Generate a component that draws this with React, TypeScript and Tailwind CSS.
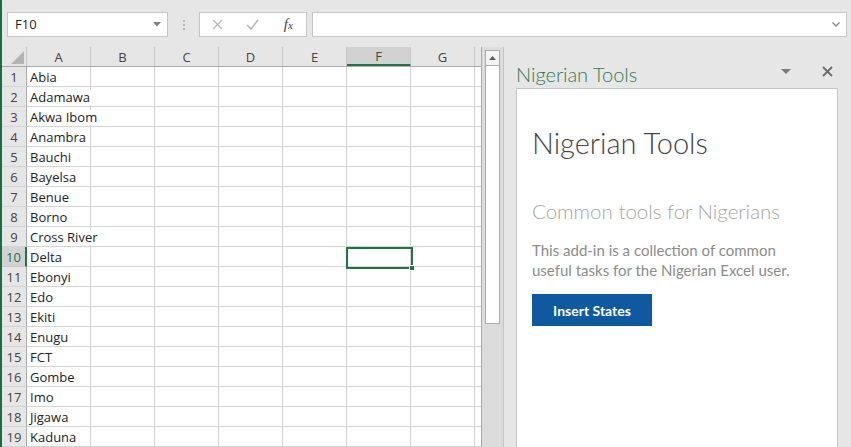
import React from 'react';

const states = [
  'Abia', 'Adamawa', 'Akwa Ibom', 'Anambra', 'Bauchi', 'Bayelsa', 'Benue', 'Borno', 'Cross River', 'Delta',
  'Ebonyi', 'Edo', 'Ekiti', 'Enugu', 'FCT', 'Gombe', 'Imo', 'Jigawa', 'Kaduna',
];
const columns = ['A', 'B', 'C', 'D', 'E', 'F', 'G'];

const cellFont = { fontFamily: '"Open Sans", "Noto Sans", sans-serif' };
const paneFont = { fontFamily: 'Lato, "Open Sans", sans-serif' };

function FormulaBar() {
  return (
    <div className="flex h-[47px] shrink-0 items-start pt-[12px] pl-[5px] pr-[4px]">
      <div className="flex h-[25px] w-[161px] items-center justify-between border border-[#c6c6c6] bg-white pl-[7px] pr-[6px] text-[13px] text-[#222]">
        <span>F10</span>
        <svg width="8" height="5" viewBox="0 0 8 5">
          <polygon points="0,0 8,0 4,4.5" fill="#808080" />
        </svg>
      </div>
      <div className="flex h-[25px] w-[31px] flex-col items-center justify-center gap-[2px]">
        <span className="h-[2px] w-[2px] bg-[#b5b5b5]" />
        <span className="h-[2px] w-[2px] bg-[#b5b5b5]" />
        <span className="h-[2px] w-[2px] bg-[#b5b5b5]" />
      </div>
      <div className="flex h-[25px] w-[108px] items-center border border-[#c6c6c6] bg-white">
        <div className="flex w-[36px] justify-center">
          <svg width="11" height="11" viewBox="0 0 11 11">
            <path d="M1 1 L10 10 M10 1 L1 10" stroke="#b8b8b8" strokeWidth="1.3" />
          </svg>
        </div>
        <div className="flex w-[36px] justify-center">
          <svg width="13" height="11" viewBox="0 0 13 11">
            <path d="M1 6 L5 10 L12 1" stroke="#b8b8b8" strokeWidth="1.6" fill="none" />
          </svg>
        </div>
        <div className="flex w-[36px] justify-center">
          <span className="text-[15px] italic leading-none text-[#444]" style={{ fontFamily: '"Liberation Serif", serif' }}>
            f<span className="text-[11px]">x</span>
          </span>
        </div>
      </div>
      <div className="ml-[5px] flex h-[25px] flex-1 items-center justify-end border border-[#c6c6c6] bg-white pr-[6px]">
        <svg width="8" height="5" viewBox="0 0 8 5">
          <path d="M0.5 0.5 L4 4 L7.5 0.5" stroke="#8a8a8a" strokeWidth="1.3" fill="none" />
        </svg>
      </div>
    </div>
  );
}

function Grid() {
  return (
    <div className="flex w-[479px] flex-col overflow-hidden text-[13px] text-[#222]" style={cellFont}>
      <div className="flex h-[20px] shrink-0 border-b border-[#ababab] bg-[#e6e6e6] text-[#444]">
        <div className="flex w-[25px] shrink-0 items-end justify-end border-r border-[#c8c8c8] pr-[2px] pb-[2px]">
          <svg width="13" height="13" viewBox="0 0 13 13">
            <polygon points="13,0 13,13 0,13" fill="#b4b4b4" />
          </svg>
        </div>
        {columns.map((c) =>
          c === 'F' ? (
            <div
              key={c}
              className="flex w-[64px] shrink-0 items-center justify-center border-r border-b-2 border-r-[#c8c8c8] border-b-[#217346] bg-[#d2d2d2] pt-[3px] text-[#444]"
            >
              {c}
            </div>
          ) : (
            <div key={c} className="flex w-[64px] shrink-0 items-center justify-center border-r border-[#c8c8c8] pt-[2px]">
              {c}
            </div>
          )
        )}
        <div className="flex-1" />
      </div>
      {states.map((s, i) => {
        const active = i === 9;
        return (
          <div key={s} className="flex h-[20px] shrink-0 bg-white">
            <div
              className={
                active
                  ? 'flex w-[25px] shrink-0 items-center justify-center border-b border-r-2 border-b-[#c8c8c8] border-r-[#217346] bg-[#d2d2d2] pt-[2px] text-[#217346]'
                  : 'flex w-[25px] shrink-0 items-center justify-center border-b border-r border-b-[#d4d4d4] border-r-[#ababab] bg-[#e6e6e6] pt-[2px] text-[#444]'
              }
            >
              {i + 1}
            </div>
            {columns.map((c) => (
              <div
                key={c}
                className="relative flex w-[64px] shrink-0 items-center whitespace-nowrap border-r border-b border-[#d4d4d4] pl-[3px] pt-[2px]"
              >
                {c === 'A' && <span className="relative z-10 bg-white pr-[1px] leading-[15px]">{s}</span>}
                {active && c === 'F' && (
                  <div className="absolute top-0 -left-[1px] z-20 h-[22px] w-[67px] border-2 border-[#217346]">
                    <div className="absolute -right-[4px] -bottom-[4px] h-[6px] w-[6px] border border-white bg-[#217346]" />
                  </div>
                )}
              </div>
            ))}
            <div className="flex-1 border-b border-[#d4d4d4]" />
          </div>
        );
      })}
    </div>
  );
}

function ScrollBar() {
  return (
    <div className="flex w-[23px] shrink-0 flex-col border-x border-x-[#ababab] border-r-[#c6c6c6] bg-[#dcdcdc] pl-[3px] pt-[3px]">
      <div className="flex h-[16px] w-[15px] items-center justify-center border border-[#ababab] bg-[#f4f4f4]">
        <svg width="7" height="4" viewBox="0 0 7 4">
          <polygon points="0,4 7,4 3.5,0" fill="#606060" />
        </svg>
      </div>
      <div className="h-[258px] w-[15px] border border-[#ababab] border-t-0 bg-white" />
    </div>
  );
}

function TaskPane() {
  return (
    <div className="flex flex-1 flex-col pl-[12px] pr-[13px]" style={paneFont}>
      <div className="flex h-[41px] shrink-0 items-center pt-[12px]">
        <span className="text-[20px] font-light text-[#2f7a56]">Nigerian Tools</span>
        <div className="flex-1" />
        <svg width="10" height="5" viewBox="0 0 10 5" className="mr-[31px] mb-[4px]">
          <polygon points="0,0 10,0 5,5" fill="#7a7a7a" />
        </svg>
        <svg width="11" height="11" viewBox="0 0 11 11" className="mr-[5px] mb-[4px]">
          <path d="M1 1 L10 10 M10 1 L1 10" stroke="#6a6a6a" strokeWidth="1.8" />
        </svg>
      </div>
      <div className="flex flex-1 flex-col border border-b-0 border-[#c6c6c6] bg-white px-[15px] pt-[34px]">
        <h1 className="text-[29px] font-light leading-[40px] text-[#444]">Nigerian Tools</h1>
        <h2 className="mt-[34px] text-[20.5px] font-light leading-[28px] text-[#a6a6a6]">Common tools for Nigerians</h2>
        <p className="mt-[15px] w-[262px] text-[15px] leading-[20px] text-[#8c8c8c]">
          This add-in is a collection of common useful tasks for the Nigerian Excel user.
        </p>
        <button className="mt-[14px] h-[32px] w-[120px] bg-[#0f5a9e] text-[14px] font-bold text-white">
          Insert States
        </button>
      </div>
    </div>
  );
}

export default function App() {
  return (
    <div className="flex h-[447px] w-[851px] overflow-hidden bg-[#e6e6e6]" style={cellFont}>
      <div className="w-[2px] shrink-0 bg-[#1f6b43]" />
      <div className="flex flex-1 flex-col">
        <FormulaBar />
        <div className="flex flex-1 overflow-hidden">
          <Grid />
          <ScrollBar />
          <TaskPane />
        </div>
      </div>
    </div>
  );
}
